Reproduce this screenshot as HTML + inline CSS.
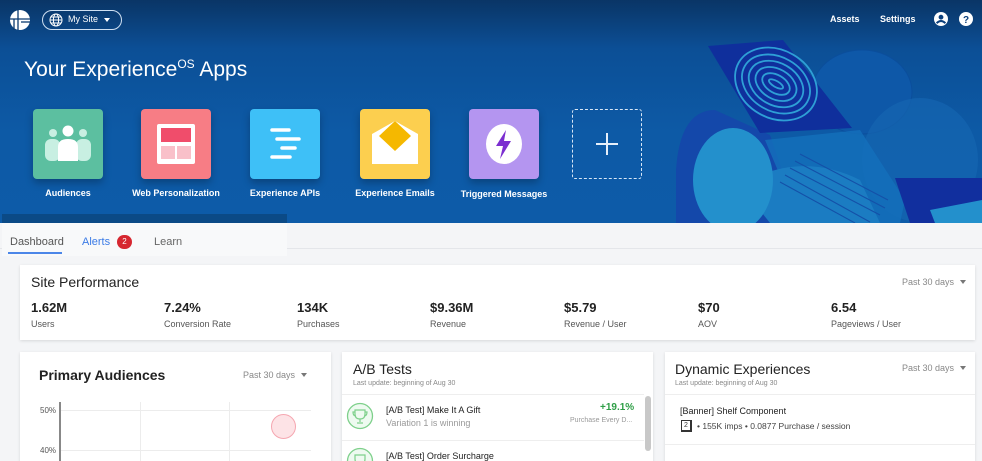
<!DOCTYPE html>
<html><head><meta charset="utf-8">
<style>
*{box-sizing:border-box;margin:0;padding:0}
html,body{width:982px;height:461px;overflow:hidden}
body{background:#f4f5f7;font-family:"Liberation Sans",Arial,sans-serif;position:relative}
.hero{position:absolute;left:0;top:0;width:982px;height:223px;background:linear-gradient(180deg,#0a3566 0%,#0c4f96 22%,#0d5aa6 60%,#0d5ba8 100%);overflow:hidden}
.abs{position:absolute}
.tile{position:absolute;top:109px;width:70px;height:70px;border-radius:4px;box-shadow:0 4px 8px rgba(0,0,0,.25)}
.lbl{position:absolute;top:188px;width:120px;text-align:center;color:#fff;font-size:9px;font-weight:bold}
.card{position:absolute;background:#fff;box-shadow:0 1px 3px rgba(0,0,0,.12)}
.m{position:absolute;top:300px}
.m b{display:block;font-size:13px;color:#222;font-weight:bold}
.m span{display:block;font-size:9px;color:#555;margin-top:4px}
.past{position:absolute;font-size:9px;color:#888}
.past:after{content:"";display:inline-block;margin-left:6px;border-left:3.5px solid transparent;border-right:3.5px solid transparent;border-top:4px solid #777;vertical-align:1px}
</style></head><body>
<div class="hero">
<svg class="abs" style="left:0;top:0" width="982" height="223">
  <ellipse cx="862" cy="92" rx="50" ry="42" fill="#0e58a8" stroke="#0b4e9c" stroke-width="1"/>
  <ellipse cx="920" cy="160" rx="58" ry="62" fill="#1565b0" opacity=".7"/>
  <path d="M676 170 Q680 110 715 110 L770 135 L800 223 L676 223 Z" fill="#1448aa"/>
  <polygon points="708,46 783,40 852,128 760,133" fill="#0f2f9c"/>
  <g fill="none" stroke="#2e9fd6" stroke-width="1.8">
    <ellipse cx="776" cy="84" rx="43" ry="34" transform="rotate(30 776 84)"/>
    <ellipse cx="776" cy="84" rx="36" ry="27" transform="rotate(30 776 84)"/>
    <ellipse cx="776" cy="84" rx="29" ry="21" transform="rotate(30 776 84)"/>
    <ellipse cx="776" cy="84" rx="22" ry="15" transform="rotate(30 776 84)"/>
    <ellipse cx="776" cy="84" rx="15" ry="9" transform="rotate(30 776 84)"/>
    <ellipse cx="776" cy="84" rx="8" ry="3" transform="rotate(30 776 84)"/>
  </g>
  <path d="M765 140 L860 130 L905 200 L900 223 L800 223 Z" fill="#1470bb" opacity=".8"/>
  <path d="M740 185 Q800 150 860 180 L880 223 L770 223 Z" fill="#1b7cc2"/>
  <g stroke="#1450a8" stroke-width="1">
    <line x1="785" y1="175" x2="870" y2="222"/><line x1="790" y1="168" x2="880" y2="215"/><line x1="795" y1="161" x2="885" y2="208"/><line x1="800" y1="154" x2="888" y2="200"/><line x1="780" y1="182" x2="855" y2="223"/>
  </g>
  <ellipse cx="733" cy="180" rx="40" ry="52" fill="#2390cc"/>
  <path d="M895 178 L982 178 L982 223 L910 223 Z" fill="#112f9e"/>
  <path d="M930 210 L982 200 L982 223 L935 223 Z" fill="#2390cc"/>
</svg>
<svg class="abs" style="left:9px;top:9px" width="22" height="22" viewBox="0 0 22 22">
  <circle cx="11" cy="11" r="10" fill="#fff"/>
  <g stroke="#0a3a70" stroke-width="1.3"><line x1="9" y1="1" x2="9" y2="21"/><line x1="1" y1="10" x2="21" y2="10"/><line x1="12" y1="13" x2="21" y2="13"/><line x1="5" y1="10" x2="5" y2="21"/></g>
</svg>
<div class="abs" style="left:42px;top:10px;width:80px;height:20px;border:1px solid #cfe0f2;border-radius:10px"></div>
<svg class="abs" style="left:49px;top:13px" width="14" height="14" viewBox="0 0 14 14" fill="none" stroke="#fff" stroke-width="1"><circle cx="7" cy="7" r="6"/><ellipse cx="7" cy="7" rx="2.6" ry="6"/><line x1="1" y1="7" x2="13" y2="7"/><line x1="2" y1="4" x2="12" y2="4"/><line x1="2" y1="10" x2="12" y2="10"/></svg>
<div class="abs" style="left:68px;top:14px;color:#fff;font-size:9px">My Site</div>
<div class="abs" style="left:104px;top:18px;border-left:3.5px solid transparent;border-right:3.5px solid transparent;border-top:4px solid #fff"></div>
<div class="abs" style="left:830px;top:14px;color:#fff;font-size:9px;font-weight:bold">Assets</div>
<div class="abs" style="left:880px;top:14px;color:#fff;font-size:9px;font-weight:bold">Settings</div>
<svg class="abs" style="left:934px;top:12px" width="14" height="14" viewBox="0 0 14 14"><circle cx="7" cy="7" r="7" fill="#fff"/><circle cx="7" cy="5.2" r="2.4" fill="#0b3f7c"/><path d="M2.6 11.2 Q7 6.8 11.4 11.2" stroke="#0b3f7c" stroke-width="2" fill="none"/></svg>
<svg class="abs" style="left:959px;top:12px" width="14" height="14" viewBox="0 0 14 14"><circle cx="7" cy="7" r="7" fill="#fff"/><text x="7" y="11" font-size="10" font-weight="bold" text-anchor="middle" fill="#0b3f7c" font-family="Liberation Sans">?</text></svg>
<div class="abs" style="left:24px;top:57px;color:#fff;font-size:21px">Your Experience<sup style="font-size:12px;vertical-align:8px">OS</sup> Apps</div>
<div class="tile" style="left:33px;background:#5cbfa0"></div>
<svg class="abs" style="left:33px;top:109px" width="70" height="70"><g fill="#c8efe2"><circle cx="20" cy="24" r="4"/><circle cx="50" cy="24" r="4"/><rect x="12" y="30" width="15" height="22" rx="6"/><rect x="43" y="30" width="15" height="22" rx="6"/></g><g fill="#fff"><circle cx="35" cy="22" r="5.5"/><path d="M25 52 V38 Q25 30 35 30 Q45 30 45 38 V52 Z"/></g></svg>
<div class="tile" style="left:141px;background:#f77d85"></div>
<svg class="abs" style="left:141px;top:109px" width="70" height="70"><rect x="16" y="15" width="38" height="40" rx="2" fill="#fff"/><rect x="20" y="19" width="30" height="14" fill="#f04d6b"/><rect x="20" y="37" width="14" height="13" fill="#f9c0c9"/><rect x="36" y="37" width="14" height="13" fill="#f9c0c9"/></svg>
<div class="tile" style="left:250px;background:#3ec0f7"></div>
<svg class="abs" style="left:250px;top:109px" width="70" height="70" stroke="#fff" stroke-width="3.5" stroke-linecap="round"><line x1="22" y1="21" x2="39" y2="21"/><line x1="27" y1="30" x2="49" y2="30"/><line x1="32" y1="39" x2="45" y2="39"/><line x1="22" y1="48" x2="40" y2="48"/></svg>
<div class="tile" style="left:360px;background:#fccf4f"></div>
<svg class="abs" style="left:360px;top:109px" width="70" height="70"><path d="M12 25 L35 12 L58 25 V55 H12 Z" fill="#fff"/><polygon points="35,12 51,27 35,42 19,27" fill="#f5b800"/></svg>
<div class="tile" style="left:469px;background:#b495f0"></div>
<svg class="abs" style="left:469px;top:109px" width="70" height="70"><ellipse cx="35" cy="35" rx="18" ry="20" fill="#fff"/><path d="M37 21 L27 37 H34 L31 50 L42 32 H35 Z" fill="#7b2ed0"/></svg>
<div class="abs" style="left:572px;top:109px;width:70px;height:70px;border:1.5px dashed #d8e6f5;border-radius:3px"></div>
<div class="abs" style="left:596px;top:143px;width:22px;height:1.5px;background:#e6effa"></div>
<div class="abs" style="left:606px;top:133px;width:1.5px;height:22px;background:#e6effa"></div>
<div class="lbl" style="left:8px">Audiences</div>
<div class="lbl" style="left:116px">Web Personalization</div>
<div class="lbl" style="left:225px">Experience APIs</div>
<div class="lbl" style="left:335px">Experience Emails</div>
<div class="lbl" style="left:444px;top:189px">Triggered Messages</div>
<div class="abs" style="left:2px;top:214px;width:285px;height:9px;background:#0b4a86"></div>
</div>
<div class="abs" style="left:0;top:223px;width:982px;height:26px;border-bottom:1px solid #e4e6ea"></div>
<div class="abs" style="left:2px;top:223px;width:285px;height:33px;background:#f8f9fa"></div>
<div class="abs" style="left:10px;top:236px;font-size:11px;color:#555">Dashboard</div>
<div class="abs" style="left:8px;top:252px;width:54px;height:2px;background:#4b86e8"></div>
<div class="abs" style="left:82px;top:236px;font-size:11px;color:#3b7be6">Alerts</div>
<div class="abs" style="left:117px;top:235px;width:15px;height:14px;border-radius:7px;background:#d62730;color:#fff;font-size:8px;text-align:center;line-height:14px">2</div>
<div class="abs" style="left:154px;top:236px;font-size:11px;color:#666">Learn</div>
<div class="card" style="left:20px;top:265px;width:955px;height:75px"></div>
<div class="abs" style="left:31px;top:274px;font-size:14px;color:#222">Site Performance</div>
<div class="past" style="left:902px;top:277px">Past 30 days</div>
<div class="m" style="left:31px"><b>1.62M</b><span>Users</span></div>
<div class="m" style="left:164px"><b>7.24%</b><span>Conversion Rate</span></div>
<div class="m" style="left:297px"><b>134K</b><span>Purchases</span></div>
<div class="m" style="left:430px"><b>$9.36M</b><span>Revenue</span></div>
<div class="m" style="left:564px"><b>$5.79</b><span>Revenue / User</span></div>
<div class="m" style="left:698px"><b>$70</b><span>AOV</span></div>
<div class="m" style="left:831px"><b>6.54</b><span>Pageviews / User</span></div>
<div class="card" style="left:20px;top:352px;width:311px;height:120px"></div>
<div class="abs" style="left:39px;top:367px;font-size:14px;color:#222;font-weight:bold">Primary Audiences</div>
<div class="past" style="left:243px;top:370px">Past 30 days</div>
<div class="abs" style="left:59px;top:402px;width:1.5px;height:60px;background:#888"></div>
<div class="abs" style="left:61px;top:410px;width:250px;height:1px;background:#ececec"></div>
<div class="abs" style="left:61px;top:450px;width:250px;height:1px;background:#ececec"></div>
<div class="abs" style="left:140px;top:402px;width:1px;height:60px;background:#ececec"></div>
<div class="abs" style="left:229px;top:402px;width:1px;height:60px;background:#ececec"></div>
<div class="abs" style="left:40px;top:406px;font-size:8px;color:#555">50%</div>
<div class="abs" style="left:40px;top:446px;font-size:8px;color:#555">40%</div>
<div class="abs" style="left:271px;top:414px;width:25px;height:25px;border-radius:50%;background:#fde3e6;border:1px solid #f5a6b0"></div>
<div class="card" style="left:342px;top:352px;width:311px;height:120px"></div>
<div class="abs" style="left:353px;top:361px;font-size:14px;color:#222">A/B Tests</div>
<div class="abs" style="left:353px;top:380px;font-size:7px;color:#888">Last update: beginning of Aug 30</div>
<div class="abs" style="left:342px;top:394px;width:302px;height:1px;background:#eee"></div>
<div class="abs" style="left:342px;top:440px;width:302px;height:1px;background:#eee"></div>
<div class="abs" style="left:645px;top:396px;width:6px;height:55px;border-radius:3px;background:#c8c8c8"></div>
<svg class="abs" style="left:346px;top:402px" width="28" height="28"><circle cx="14" cy="14" r="12.5" fill="#eefaf0" stroke="#7ed08b" stroke-width="1.3"/><path d="M9 8 H19 V12 Q19 17 14 17 Q9 17 9 12 Z M9 10 H7 Q7 14 10 14 M19 10 H21 Q21 14 18 14 M14 17 V20 M11 21 H17" fill="none" stroke="#7ed08b" stroke-width="1.2"/></svg>
<svg class="abs" style="left:346px;top:447px" width="28" height="28"><circle cx="14" cy="14" r="12.5" fill="#eefaf0" stroke="#7ed08b" stroke-width="1.3"/><path d="M9 8 H19 V12 Q19 17 14 17 Q9 17 9 12 Z" fill="none" stroke="#7ed08b" stroke-width="1.2"/></svg>
<div class="abs" style="left:386px;top:405px;font-size:9px;color:#222">[A/B Test] Make It A Gift</div>
<div class="abs" style="left:386px;top:418px;font-size:9px;color:#999">Variation 1 is winning</div>
<div class="abs" style="left:600px;top:402px;font-size:10px;color:#2e9e46;font-weight:bold">+19.1%</div>
<div class="abs" style="left:570px;top:417px;font-size:7px;color:#999">Purchase Every D...</div>
<div class="abs" style="left:386px;top:451px;font-size:9px;color:#222">[A/B Test] Order Surcharge</div>
<div class="card" style="left:665px;top:352px;width:310px;height:120px"></div>
<div class="abs" style="left:675px;top:361px;font-size:14px;color:#222">Dynamic Experiences</div>
<div class="past" style="left:902px;top:363px">Past 30 days</div>
<div class="abs" style="left:675px;top:380px;font-size:7px;color:#888">Last update: beginning of Aug 30</div>
<div class="abs" style="left:665px;top:394px;width:310px;height:1px;background:#eee"></div>
<div class="abs" style="left:665px;top:444px;width:310px;height:1px;background:#eee"></div>
<div class="abs" style="left:680px;top:406px;font-size:9px;color:#222">[Banner] Shelf Component</div>
<div class="abs" style="left:681px;top:420px;width:11px;height:12px;border:1px solid #333;border-right-width:2px;border-bottom-width:2px;font-size:7px;text-align:center;line-height:10px;color:#333">2</div>
<div class="abs" style="left:697px;top:421px;font-size:8.5px;color:#444">• 155K imps • 0.0877 Purchase / session</div>
</body></html>
